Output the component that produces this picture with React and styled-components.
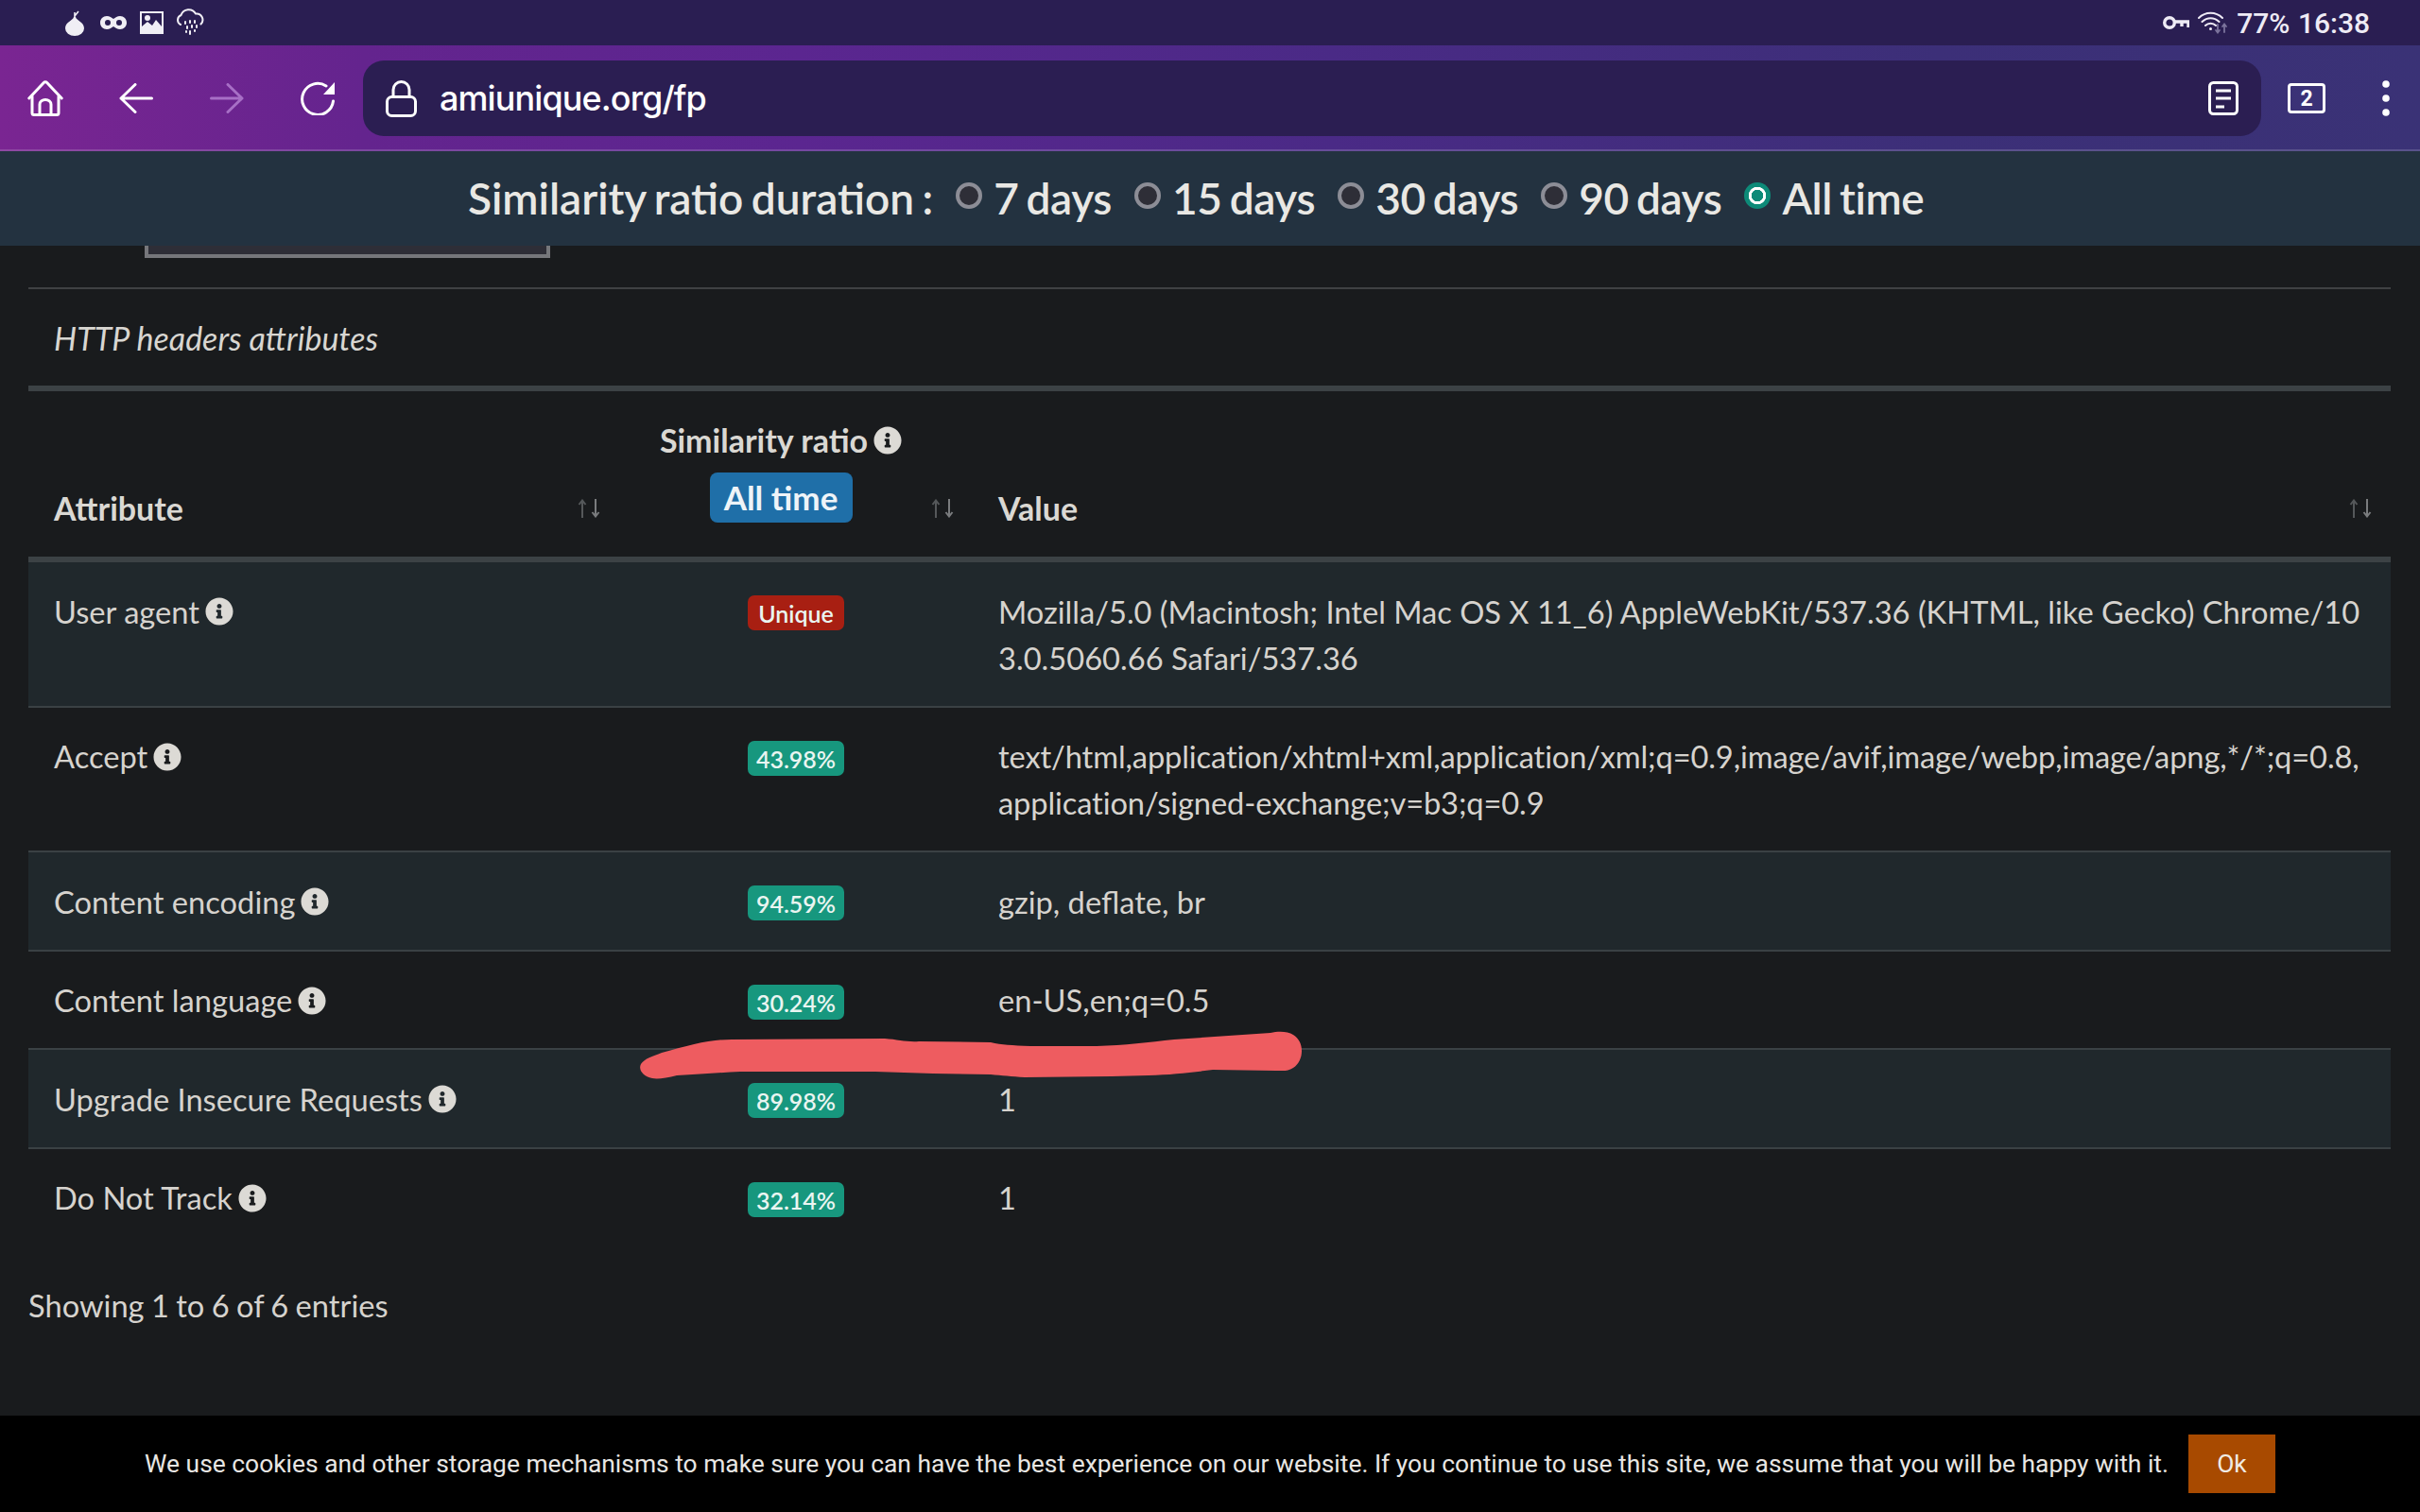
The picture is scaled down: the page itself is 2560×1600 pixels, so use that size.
import React from "react";
import styled, { createGlobalStyle } from "styled-components";
import { FaInfoCircle } from "react-icons/fa";

const Global = createGlobalStyle`
  html, body { margin: 0; padding: 0; background: #191b1d; }
  * { box-sizing: border-box; }
`;

const Screen = styled.div`
  position: relative;
  width: 2560px;
  height: 1600px;
  overflow: hidden;
  display: flex;
  flex-direction: column;
  background: #191b1d;
  font-family: "Lato", "Liberation Sans", sans-serif;
  color: #d8d6d1;
`;

const StatusBar = styled.div`
  flex: 0 0 48px;
  background: #2a1e52;
  display: flex;
  align-items: center;
  justify-content: space-between;
  padding: 0 53px 0 68px;
  color: #eeebf5;
  font-family: "Roboto", sans-serif;
  font-weight: 500;
  font-size: 30px;
`;

const StatusGroup = styled.div`
  display: flex;
  align-items: center;
  gap: ${(p) => p.$gap}px;
`;

const StatusClock = styled.span`
  word-spacing: 1px;
`;

const Toolbar = styled.div`
  flex: 0 0 112px;
  display: flex;
  align-items: center;
  padding-bottom: 14px;
  padding-top: 16px;
  background: linear-gradient(90deg, #7a2592 0%, #64248e 15%, #5b2690 33%, #4a2a86 55%, #3c2f78 80%, #3a3276 100%);
  background-origin: border-box;
  border-bottom: 2px solid rgba(255, 255, 255, 0.16);
`;

const NavButton = styled.div`
  flex: 0 0 ${(p) => p.$w || 96}px;
  display: flex;
  align-items: center;
  justify-content: center;
  color: ${(p) => (p.$dim ? "#a76fc6" : "#ffffff")};
`;

const UrlBar = styled.div`
  flex: 1;
  height: 80px;
  display: flex;
  align-items: center;
  gap: 24px;
  padding: 0 24px;
  border-radius: 22px;
  background: #2b1e52;
  color: #ffffff;
`;

const UrlText = styled.span`
  flex: 1;
  font-family: "Inter", sans-serif;
  font-weight: 500;
  font-size: 36px;
  letter-spacing: -0.9px;
`;

const TabCount = styled.div`
  width: 40px;
  height: 32px;
  border: 3px solid #fff;
  border-radius: 4px;
  display: flex;
  align-items: center;
  justify-content: center;
  font-family: "Roboto", sans-serif;
  font-weight: 700;
  font-size: 23px;
  color: #fff;
`;

const DurationBar = styled.div`
  flex: 0 0 100px;
  background: #233240;
  display: flex;
  align-items: center;
  gap: 24px;
  padding-left: 495px;
  padding-bottom: 2px;
  font-size: 46px;
  font-weight: 600;
  letter-spacing: -0.4px;
  word-spacing: -3px;
  color: #e9e8e4;
`;

const DurationLabel = styled.span`
  letter-spacing: 0;
`;

const DurationOption = styled.label`
  display: flex;
  align-items: center;
  gap: 12px;
`;

const Radio = styled.input.attrs({ type: "radio", readOnly: true })`
  appearance: none;
  margin: -4px 0 0;
  width: 28px;
  height: 28px;
  border-radius: 50%;
  border: 4px solid #8c8d96;
  background: #2e2e37;
  &:checked {
    border: none;
    background: radial-gradient(circle, #0d8a78 0 6px, #ffffff 6.5px 9px, #0d8a78 9.5px);
  }
`;

const Content = styled.main`
  flex: 1;
  min-height: 0;
  display: flex;
  flex-direction: column;
  padding: 0 31px 0 30px;
`;

const ClippedBox = styled.div`
  flex: 0 0 13px;
  width: 429px;
  margin-left: 123px;
  background: #2e2e37;
  border: 4px solid #76777b;
  border-top: none;
`;

const SectionTitle = styled.div`
  margin-top: 31px;
  height: 110px;
  padding: 27px 27px 0;
  border-top: 2px solid #3f4143;
  border-bottom: 6px solid #3c4245;
  font-style: italic;
  font-size: 34px;
  line-height: 49px;
  color: #d8d6d1;
`;

const Table = styled.table`
  width: 100%;
  table-layout: fixed;
  border-collapse: separate;
  border-spacing: 0;
  font-size: 32.65px;
  line-height: 49px;
`;

const Column = styled.col`
  width: ${(p) => p.$w}px;
`;

const HeadCell = styled.th`
  height: 181px;
  vertical-align: bottom;
  border-bottom: 6px solid #3c4245;
  padding: 0 19px 27px ${(p) => p.$pl ?? 27}px;
  text-align: left;
  font-size: 34px;
  font-weight: 700;
  color: #dad8d3;
`;

const HeadInner = styled.div`
  display: flex;
  align-items: flex-end;
  justify-content: space-between;
`;

const HeadStack = styled.div`
  flex: 1;
  display: flex;
  flex-direction: column;
  align-items: center;
  gap: 10px;
  margin-bottom: 9px;
`;

const HeadTitle = styled.span`
  display: inline-flex;
  align-items: center;
  gap: 6px;
  font-size: 34px;
`;

const PeriodBadge = styled.span`
  width: 151px;
  height: 53px;
  border-radius: 8px;
  background: #1f6fa8;
  color: #eef4f8;
  font-size: 35px;
  line-height: 53px;
  text-align: center;
`;

const SortIcon = styled.svg`
  flex: 0 0 26px;
  width: 26px;
  height: 20px;
  margin-bottom: 14px;
`;

const Row = styled.tr`
  background: ${(p) => (p.$odd ? "#20282c" : "transparent")};
`;

const Cell = styled.td`
  padding: 27.5px 19px 26px 27px;
  vertical-align: top;
  border-bottom: ${(p) => (p.$last ? "none" : "2px solid #3a4144")};
  color: #d6d3ce;
  text-align: left;
  word-break: ${(p) => (p.$break ? "break-all" : "normal")};
  letter-spacing: ${(p) => (p.$tight ? "-0.12px" : "normal")};
`;

const RatioCell = styled(Cell)`
  padding-left: 0;
  padding-right: 0;
  text-align: center;
`;

const Attr = styled.span`
  display: inline-flex;
  align-items: center;
  gap: 6px;
`;

const Info = styled(FaInfoCircle)`
  width: 30px;
  height: 30px;
  color: #dcdad5;
  flex: none;
`;

const Ratio = styled.span`
  display: inline-block;
  width: 102px;
  height: 37px;
  border-radius: 7px;
  margin-top: 7.5px;
  background: ${(p) => (p.$unique ? "#a81f12" : "#17977e")};
  color: #eaf5f1;
  font-size: 25px;
  font-weight: 600;
  line-height: 38px;
  text-align: center;
  vertical-align: top;
`;

const Entries = styled.div`
  margin-top: 39px;
  font-size: 32.65px;
  line-height: 49px;
  word-spacing: -1px;
  color: #d6d3ce;
`;

const CookieBar = styled.footer`
  flex: 0 0 102px;
  background: #000;
  display: flex;
  align-items: center;
  justify-content: center;
  gap: 21px;
  font-family: "Roboto", sans-serif;
  font-size: 26.4px;
  color: #e8e6e3;
`;

const OkButton = styled.button`
  width: 92px;
  height: 62px;
  border: none;
  background: #a84a00;
  color: #f0ebe4;
  font-family: inherit;
  font-size: 26.4px;
`;

const Scribble = styled.svg`
  position: absolute;
  left: 670px;
  top: 1085px;
  width: 715px;
  height: 65px;
`;

const Sort = () => (
  <SortIcon viewBox="0 0 26 20" fill="none" strokeWidth="2">
    <path d="M6 20V2M2.5 6L6 1.5 9.5 6" stroke="#55585a" />
    <path d="M20 0v18M16.5 14l3.5 4.5 3.5-4.5" stroke="#7a7c7e" />
  </SortIcon>
);

const rows = [
  ["User agent", "Unique", "Mozilla/5.0 (Macintosh; Intel Mac OS X 11_6) AppleWebKit/537.36 (KHTML, like Gecko) Chrome/103.0.5060.66 Safari/537.36"],
  ["Accept", "43.98%", "text/html,application/xhtml+xml,application/xml;q=0.9,image/avif,image/webp,image/apng,*/*;q=0.8,application/signed-exchange;v=b3;q=0.9", true],
  ["Content encoding", "94.59%", "gzip, deflate, br"],
  ["Content language", "30.24%", "en-US,en;q=0.5"],
  ["Upgrade Insecure Requests", "89.98%", "1"],
  ["Do Not Track", "32.14%", "1"],
];

export default function App() {
  return (
    <Screen>
      <Global />
      <StatusBar>
        <StatusGroup $gap={14}>
          <svg width="22" height="28" viewBox="0 0 22 28" fill="#f0eef5">
            <path d="M10 8C9 12 1 13 1 20a10 8 0 0 0 20 0c0-7-8-8-9-12z" />
            <path d="M11 9V3M11 7l4-5" stroke="#f0eef5" strokeWidth="1.6" fill="none" />
          </svg>
          <svg width="28" height="16" viewBox="0 0 28 16" style={{ marginLeft: 2 }}>
            <path fillRule="evenodd" fill="#f0eef5" d="M7 1c3 0 5 1.500 7 3 2-1.500 4-3 7-3 4 0 7 3 7 7s-3 7-7 7c-3 0-5-1.500-7-3-2 1.500-4 3-7 3-4 0-7-3-7-7s3-7 7-7zM8 5a3 3 0 1 0 0 6 3 3 0 0 0 0-6zM20 5a3 3 0 1 0 0 6 3 3 0 0 0 0-6z" />
          </svg>
          <svg width="25" height="24" viewBox="0 0 25 24">
            <path fillRule="evenodd" fill="#f0eef5" d="M0 0h25v24H0zM2 2v14l6-5 5 4 4-6 6 7V2zM8 4a3 3 0 1 1 0 6 3 3 0 0 1 0-6z" />
          </svg>
          <svg width="30" height="30" viewBox="0 0 30 30" fill="none" stroke="#f0eef5" strokeWidth="2" strokeLinecap="round" style={{ marginLeft: -1 }}>
            <path d="M5 17A5.500 5.500 0 0 1 5.500 7 8.500 8.500 0 0 1 21 5.500 6.500 6.500 0 0 1 26.500 16.500" />
            <path d="M10 14v2M15 13v2M20 13v2M12 19v2M17 18v2M22 18v2M15 24v3M11 24v1M20 23v1" strokeWidth="2" />
          </svg>
        </StatusGroup>
        <StatusGroup $gap={9}>
          <svg width="28" height="14" viewBox="0 0 28 14" fill="none" stroke="#eeebf5" strokeWidth="3.4">
            <circle cx="7" cy="7" r="5.300" />
            <path d="M12 6h15v6M20 6v5" />
          </svg>
          <svg width="32" height="24" viewBox="0 0 32 24" fill="none" stroke="#eeebf5" strokeWidth="2" strokeLinecap="round">
            <path d="M1 7C8 0 19 0 26 7M4.500 11C10 6 17 6 22.500 11M8 15c3-3 8-3 11 0" />
            <circle cx="13.500" cy="18.500" r="1.500" fill="#eeebf5" stroke="none" />
            <path d="M21 14v8M19 20l2 2.500 2-2.500M28 22v-8M26 16l2-2.500 2 2.500" stroke="#7b739c" strokeWidth="1.800" />
          </svg>
          <StatusClock>77% 16:38</StatusClock>
        </StatusGroup>
      </StatusBar>

      <Toolbar>
        <NavButton>
          <svg width="38" height="38" viewBox="0 0 38 38" fill="none" stroke="currentColor" strokeWidth="3" strokeLinecap="round" strokeLinejoin="round">
            <path d="M5 17v17.500a2 2 0 0 0 2 2h24a2 2 0 0 0 2-2V17" />
            <path d="M1.800 19L17.300 2.500a2.400 2.400 0 0 1 3.400 0L36.200 19" />
            <path d="M13 36.500V25.500a6 5 0 0 1 12 0v11" />
          </svg>
        </NavButton>
        <NavButton>
          <svg width="36" height="32" viewBox="0 0 36 32" fill="none" stroke="currentColor" strokeWidth="3" strokeLinecap="round" strokeLinejoin="round">
            <path d="M34.500 16H2M17 1.500L2 16l15 14.500" />
          </svg>
        </NavButton>
        <NavButton $dim>
          <svg width="36" height="32" viewBox="0 0 36 32" fill="none" stroke="currentColor" strokeWidth="3" strokeLinecap="round" strokeLinejoin="round">
            <path d="M1.500 16H34M19 1.500L34 16 19 30.500" />
          </svg>
        </NavButton>
        <NavButton>
          <svg width="36" height="36" viewBox="0 0 36 36" fill="none" stroke="currentColor" strokeWidth="3" strokeLinecap="round">
            <path d="M27 5A16.500 16.500 0 1 0 34.500 21" />
            <path d="M36 1v13H24z" fill="currentColor" stroke="none" />
          </svg>
        </NavButton>
        <UrlBar>
          <svg width="33" height="39" viewBox="0 0 33 39" fill="none" stroke="currentColor" strokeWidth="3" strokeLinecap="round">
            <rect x="1.500" y="17.500" width="30" height="20" rx="5" />
            <path d="M8 17V10a8.500 8.500 0 0 1 17 0v7" />
          </svg>
          <UrlText>amiunique.org/fp</UrlText>
          <svg width="32" height="36" viewBox="0 0 32 36" fill="none" stroke="currentColor" strokeWidth="3">
            <rect x="1.500" y="1.500" width="29" height="33" rx="4" />
            <path d="M8 10h16M8 18h16M8 27h9" />
          </svg>
        </UrlBar>
        <NavButton>
          <TabCount>2</TabCount>
        </NavButton>
        <NavButton $w={72}>
          <svg width="8" height="38" viewBox="0 0 8 38" fill="currentColor">
            <circle cx="4" cy="4" r="3.800" />
            <circle cx="4" cy="19" r="3.800" />
            <circle cx="4" cy="34" r="3.800" />
          </svg>
        </NavButton>
      </Toolbar>

      <DurationBar>
        <DurationLabel>Similarity ratio duration :</DurationLabel>
        {["7 days", "15 days", "30 days", "90 days", "All time"].map((d) => (
          <DurationOption key={d}>
            <Radio name="duration" defaultChecked={d === "All time"} />
            {d}
          </DurationOption>
        ))}
      </DurationBar>

      <Content>
        <ClippedBox />
        <SectionTitle>HTTP headers attributes</SectionTitle>
        <Table>
          <colgroup>
            <Column $w={625} />
            <Column $w={374} />
            <Column />
          </colgroup>
          <thead>
            <tr>
              <HeadCell>
                <HeadInner>
                  Attribute
                  <Sort />
                </HeadInner>
              </HeadCell>
              <HeadCell $pl={13}>
                <HeadInner>
                  <HeadStack>
                    <HeadTitle>
                      Similarity ratio
                      <Info />
                    </HeadTitle>
                    <PeriodBadge>All time</PeriodBadge>
                  </HeadStack>
                  <Sort />
                </HeadInner>
              </HeadCell>
              <HeadCell>
                <HeadInner>
                  Value
                  <Sort />
                </HeadInner>
              </HeadCell>
            </tr>
          </thead>
          <tbody>
            {rows.map(([name, ratio, value, tight], i) => (
              <Row key={name} $odd={i % 2 === 0}>
                <Cell $last={i === rows.length - 1}>
                  <Attr>
                    {name}
                    <Info />
                  </Attr>
                </Cell>
                <RatioCell $last={i === rows.length - 1}>
                  <Ratio $unique={ratio === "Unique"}>{ratio}</Ratio>
                </RatioCell>
                <Cell $last={i === rows.length - 1} $break $tight={tight}>
                  {value}
                </Cell>
              </Row>
            ))}
          </tbody>
        </Table>
        <Entries>Showing 1 to 6 of 6 entries</Entries>
      </Content>

      <CookieBar>
        <span>We use cookies and other storage mechanisms to make sure you can have the best experience on our website. If you continue to use this site, we assume that you will be happy with it.</span>
        <OkButton>Ok</OkButton>
      </CookieBar>

      <Scribble viewBox="670 1085 715 65">
        <path
          fill="#ee5c60"
          d="M678 1126C682 1120 690 1118 700 1114C730 1106 750 1100 774 1100L936 1099C950 1100 960 1103 972 1102L1048 1103C1060 1106 1070 1106 1090 1107L1160 1107C1190 1106 1215 1103 1242 1100L1344 1093C1352 1091 1362 1091 1368 1095C1380 1102 1380 1122 1368 1130C1362 1134 1358 1133 1350 1133L1283 1132C1260 1135 1240 1137 1215 1138L1176 1139L1084 1140C1070 1139 1060 1138 1048 1137L987 1136L926 1134L783 1134C760 1135 740 1137 716 1138C705 1141 695 1142 690 1141C680 1139 675 1132 678 1126Z"
        />
      </Scribble>
    </Screen>
  );
}
